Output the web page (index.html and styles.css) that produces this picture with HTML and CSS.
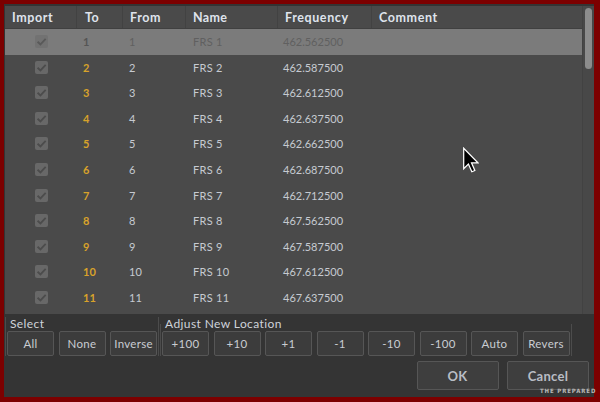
FILE: index.html
```html
<!DOCTYPE html>
<html>
<head>
<meta charset="utf-8">
<link rel="stylesheet" href="styles.css">
</head>
<body>
<div class="window">
  <div class="grid-wrap">
    <div class="grid">
      <div class="row head">
        <div class="c c-imp">Import</div>
        <div class="c c-to">To</div>
        <div class="c c-from">From</div>
        <div class="c c-name">Name</div>
        <div class="c c-freq">Frequency</div>
        <div class="c c-com">Comment</div>
      </div>
      <div class="row sel">
        <div class="c c-imp"><span class="chk"><svg viewBox="0 0 10 10"><path d="M2 5.2 L4.2 7.3 L8.2 3" /></svg></span></div>
        <div class="c c-to num">1</div><div class="c c-from">1</div><div class="c c-name">FRS 1</div><div class="c c-freq">462.562500</div><div class="c c-com"></div>
      </div>
      <div class="row">
        <div class="c c-imp"><span class="chk"><svg viewBox="0 0 10 10"><path d="M2 5.2 L4.2 7.3 L8.2 3" /></svg></span></div>
        <div class="c c-to num">2</div><div class="c c-from">2</div><div class="c c-name">FRS 2</div><div class="c c-freq">462.587500</div><div class="c c-com"></div>
      </div>
      <div class="row">
        <div class="c c-imp"><span class="chk"><svg viewBox="0 0 10 10"><path d="M2 5.2 L4.2 7.3 L8.2 3" /></svg></span></div>
        <div class="c c-to num">3</div><div class="c c-from">3</div><div class="c c-name">FRS 3</div><div class="c c-freq">462.612500</div><div class="c c-com"></div>
      </div>
      <div class="row">
        <div class="c c-imp"><span class="chk"><svg viewBox="0 0 10 10"><path d="M2 5.2 L4.2 7.3 L8.2 3" /></svg></span></div>
        <div class="c c-to num">4</div><div class="c c-from">4</div><div class="c c-name">FRS 4</div><div class="c c-freq">462.637500</div><div class="c c-com"></div>
      </div>
      <div class="row">
        <div class="c c-imp"><span class="chk"><svg viewBox="0 0 10 10"><path d="M2 5.2 L4.2 7.3 L8.2 3" /></svg></span></div>
        <div class="c c-to num">5</div><div class="c c-from">5</div><div class="c c-name">FRS 5</div><div class="c c-freq">462.662500</div><div class="c c-com"></div>
      </div>
      <div class="row">
        <div class="c c-imp"><span class="chk"><svg viewBox="0 0 10 10"><path d="M2 5.2 L4.2 7.3 L8.2 3" /></svg></span></div>
        <div class="c c-to num">6</div><div class="c c-from">6</div><div class="c c-name">FRS 6</div><div class="c c-freq">462.687500</div><div class="c c-com"></div>
      </div>
      <div class="row">
        <div class="c c-imp"><span class="chk"><svg viewBox="0 0 10 10"><path d="M2 5.2 L4.2 7.3 L8.2 3" /></svg></span></div>
        <div class="c c-to num">7</div><div class="c c-from">7</div><div class="c c-name">FRS 7</div><div class="c c-freq">462.712500</div><div class="c c-com"></div>
      </div>
      <div class="row">
        <div class="c c-imp"><span class="chk"><svg viewBox="0 0 10 10"><path d="M2 5.2 L4.2 7.3 L8.2 3" /></svg></span></div>
        <div class="c c-to num">8</div><div class="c c-from">8</div><div class="c c-name">FRS 8</div><div class="c c-freq">467.562500</div><div class="c c-com"></div>
      </div>
      <div class="row">
        <div class="c c-imp"><span class="chk"><svg viewBox="0 0 10 10"><path d="M2 5.2 L4.2 7.3 L8.2 3" /></svg></span></div>
        <div class="c c-to num">9</div><div class="c c-from">9</div><div class="c c-name">FRS 9</div><div class="c c-freq">467.587500</div><div class="c c-com"></div>
      </div>
      <div class="row">
        <div class="c c-imp"><span class="chk"><svg viewBox="0 0 10 10"><path d="M2 5.2 L4.2 7.3 L8.2 3" /></svg></span></div>
        <div class="c c-to num">10</div><div class="c c-from">10</div><div class="c c-name">FRS 10</div><div class="c c-freq">467.612500</div><div class="c c-com"></div>
      </div>
      <div class="row">
        <div class="c c-imp"><span class="chk"><svg viewBox="0 0 10 10"><path d="M2 5.2 L4.2 7.3 L8.2 3" /></svg></span></div>
        <div class="c c-to num">11</div><div class="c c-from">11</div><div class="c c-name">FRS 11</div><div class="c c-freq">467.637500</div><div class="c c-com"></div>
      </div>
    </div>
    <div class="scrollbar"><div class="thumb"></div></div>
  </div>

  <div class="controls">
    <div class="group g-select">
      <div class="glabel">Select</div>
      <div class="btns">
        <button class="btn">All</button>
        <button class="btn">None</button>
        <button class="btn">Inverse</button>
      </div>
    </div>
    <div class="group g-adjust">
      <div class="glabel">Adjust New Location</div>
      <div class="btns">
        <button class="btn">+100</button>
        <button class="btn">+10</button>
        <button class="btn">+1</button>
        <button class="btn">-1</button>
        <button class="btn">-10</button>
        <button class="btn">-100</button>
        <button class="btn">Auto</button>
        <button class="btn">Revers</button>
      </div>
    </div>
  </div>

  <div class="actions">
    <button class="btn big">OK</button>
    <button class="btn big">Cancel</button>
  </div>

  <div class="watermark">THE PREPARED</div>

  <svg class="cursor" viewBox="0 0 13 21" width="17" height="26">
    <path d="M1 1 L1 17.5 L4.8 13.8 L7.6 20 L10 19 L7.3 12.8 L12.5 12.8 Z" fill="#000" stroke="#fff" stroke-width="1" stroke-linejoin="miter"/>
  </svg>
</div>
</body>
</html>
```

FILE: styles.css
```css
html, body {
  margin: 0;
  padding: 0;
}
body {
  width: 600px;
  height: 402px;
  overflow: hidden;
  background: #7c0000;
  font-family: Lato, "Open Sans", "Liberation Sans", sans-serif;
}
.window {
  position: relative;
  box-sizing: border-box;
  margin: 4px 6px 0 4px;
  width: 590px;
  height: 393px;
  background: #343434;
  padding: 2px 0 0 1px;
}
.grid-wrap {
  display: flex;
  height: 308px;
  background: #4a4a4a;
  overflow: hidden;
}
.grid {
  flex: 1;
  display: flex;
  flex-direction: column;
}
.row {
  display: grid;
  grid-template-columns: 72px 46px 63px 92px 94px 1fr;
  height: 25.55px;
  align-items: center;
  font-size: 11px;
  color: #c6cad1;
  letter-spacing: 0;
}
.row.head {
  height: 23px;
  align-items: stretch;
  border-bottom: 1px solid #404040;
  box-sizing: border-box;
  font-weight: 700;
  font-size: 12.5px;
  color: #dfe3ec;
  letter-spacing: 0.6px;
}
.row.head .c {
  display: flex;
  align-items: center;
  border-right: 1px solid #424242;
  padding-left: 7px;
}
.row.head .c.c-com { border-right: none; }
.row.head .c-to { padding-left: 8px; }
.c { white-space: nowrap; overflow: hidden; }
.c-to, .c-from { padding-left: 6px; }
.c-name { padding-left: 7px; letter-spacing: 0.3px; }
.c-freq { padding-left: 5px; }
.c-imp { display: flex; justify-content: center; }
.row.head .c-imp { justify-content: flex-start; }
.num { color: #d8a22a; font-weight: 700; }
.chk {
  display: block;
  width: 13px;
  height: 13px;
  border-radius: 2px;
  background: #686868;
}
.chk svg {
  display: block;
  width: 13px;
  height: 13px;
}
.chk path {
  fill: none;
  stroke: #4c4c4c;
  stroke-width: 1.4;
}
.row.sel {
  background: #7b7b7b;
  color: #606060;
}
.row.sel .num { color: #555; }
.row.sel .chk { background: #727272; }
.row.sel .chk path { stroke: #595959; }
.scrollbar {
  width: 11px;
  border-left: 1px solid #424242;
  background: #484848;
  position: relative;
}
.thumb {
  margin: 2px 0 0 2px;
  width: 7px;
  height: 61px;
  border-radius: 4px;
  background: #8c8c8c;
}
.controls {
  display: flex;
  gap: 1px;
  margin-top: 3px;
  color: #c9ccd2;
  font-size: 12px;
}
.group {
  border-left: 1px solid #4c4c4c;
  border-right: 1px solid #4c4c4c;
  padding: 0 1px;
}
.glabel {
  height: 14px;
  line-height: 14px;
  padding-left: 3px;
  letter-spacing: 0.4px;
  color: #cfd3da;
}
.g-adjust { margin-top: 7px; }
.g-adjust .glabel { margin-top: -7px; }
.btns {
  display: flex;
  gap: 4.5px;
}
.btn {
  box-sizing: border-box;
  width: 47px;
  height: 25px;
  margin: 0;
  padding: 0;
  background: #3c3c3c;
  border: 1px solid #565656;
  border-radius: 2px;
  color: #c9ccd2;
  font-family: Lato, "Open Sans", sans-serif;
  font-size: 11.5px;
  letter-spacing: 0.3px;
  white-space: nowrap;
  overflow: hidden;
}
.actions {
  display: flex;
  justify-content: flex-end;
  gap: 8.5px;
  padding-right: 5px;
  margin-top: 5px;
}
.btn.big {
  width: 82px;
  height: 29px;
  font-size: 13px;
  font-weight: 700;
  color: #b9bdc5;
  background: #3e3e3e;
}
.watermark {
  position: absolute;
  left: 536px;
  top: 383px;
  white-space: nowrap;
  font-family: "DejaVu Sans Condensed", "Liberation Sans Narrow", sans-serif;
  font-weight: 700;
  font-size: 6px;
  line-height: 7px;
  letter-spacing: 0.9px;
  color: #b8b8b8;
}
.cursor {
  position: absolute;
  left: 458px;
  top: 143px;
}
```
